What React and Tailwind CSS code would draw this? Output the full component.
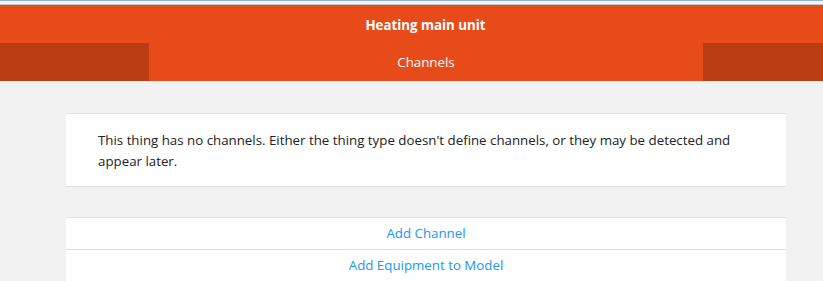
export default function App() {
  return (
    <div className="min-h-[281px] bg-[#f2f2f2] font-['Open_Sans',sans-serif] text-[13.3px]">
      <div className="h-px bg-[#8fb0e0]" />
      <div className="h-[3px] bg-[#f4f6fa]" />
      <div className="h-px bg-[#c9c9c9]" />
      <div className="bg-[#e74b1a] text-white">
        <div className="flex h-[38px] items-center justify-center pt-[3px] pl-[28px] font-bold">Heating main unit</div>
        <div className="flex h-[38px]">
          <div className="w-[149px] bg-[#ba3c13]" />
          <div className="flex flex-1 items-center justify-center pt-px">Channels</div>
          <div className="w-[120px] bg-[#ba3c13]" />
        </div>
      </div>
      <div className="mx-[66px] w-[720px] pt-8">
        <div className="border-y border-[#e0e0e0] bg-white px-8 pt-4 pb-[14px] leading-[21px] text-[#222]">
          This thing has no channels. Either the thing type doesn't define channels, or they may be detected and appear later.
        </div>
        <div className="mt-[30px] border-t border-[#e0e0e0] bg-white text-[#2196f3]">
          <div className="flex h-[32px] items-center justify-center border-b border-[#e0e0e0]">Add Channel</div>
          <div className="flex h-[32px] items-center justify-center border-b border-[#e0e0e0]">Add Equipment to Model</div>
        </div>
      </div>
    </div>
  );
}
